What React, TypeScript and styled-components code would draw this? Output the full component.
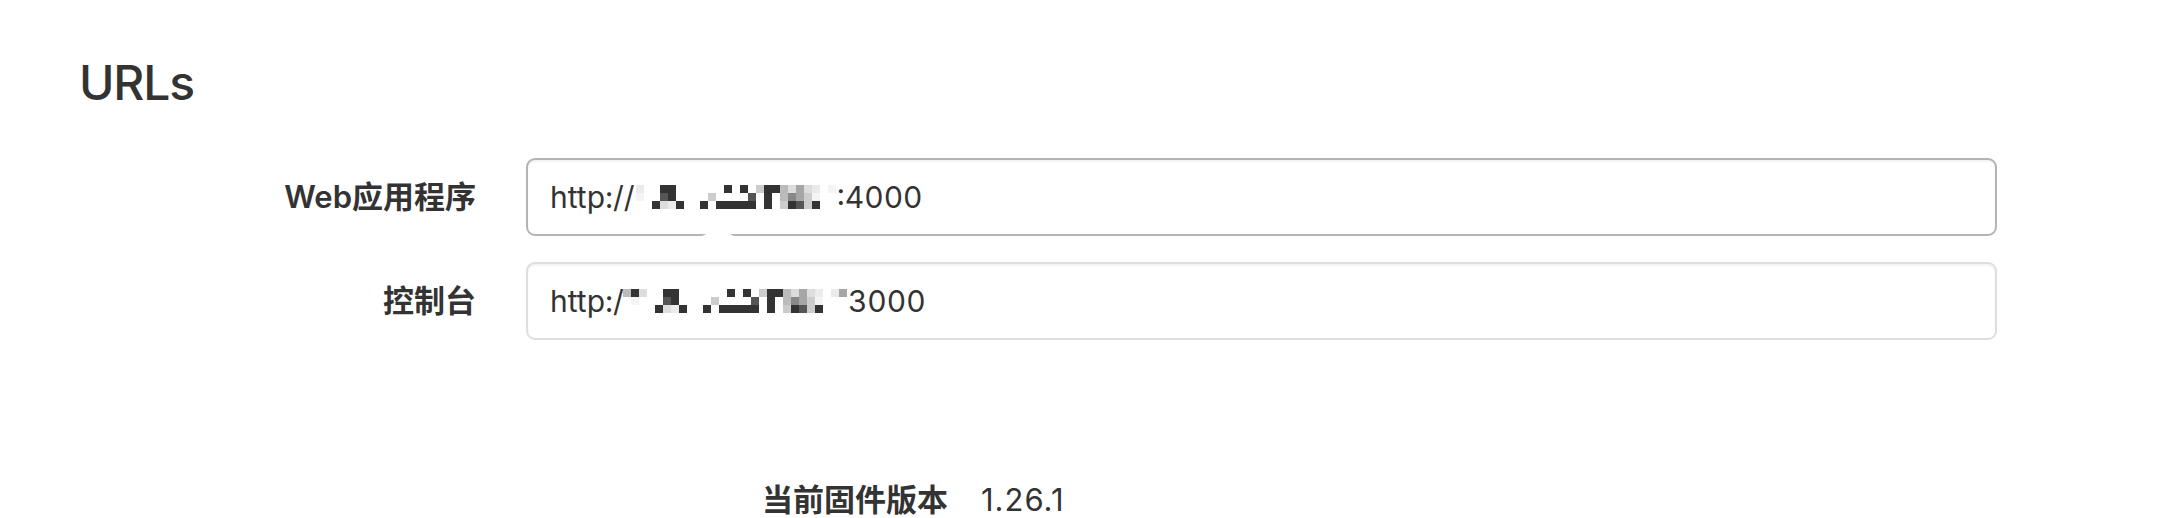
import React from 'react';
import styled, { createGlobalStyle } from 'styled-components';

const GlobalStyle = createGlobalStyle`
  html, body {
    margin: 0;
    padding: 0;
    background: #fff;
  }
  body {
    width: 2164px;
    height: 518px;
    overflow: hidden;
    color: #333;
    font-family: Inter, "Noto Sans CJK SC", sans-serif;
  }
`;

const Page = styled.div`
  padding: 59px 0 0 79px;
`;

const Title = styled.h3`
  margin: 0 0 51px;
  font-size: 48px;
  line-height: 48px;
  font-weight: 500;
  letter-spacing: -1.2px;
`;

const Form = styled.div`
  display: grid;
  grid-template-columns: 397px 1471px;
  column-gap: 50px;
  row-gap: 26px;
  align-items: center;
`;

const Label = styled.label`
  justify-self: end;
  text-align: right;
  font-size: 31px;
  font-weight: 600;
  line-height: 40px;
`;

const Field = styled.div<{ $active?: boolean }>`
  position: relative;
  box-sizing: border-box;
  height: 78px;
  display: flex;
  align-items: center;
  padding: 0 22px;
  border: 2px solid ${(p) => (p.$active ? '#b4b4b4' : '#dedede')};
  border-radius: 9px;
  box-shadow: inset 0 2px 2px rgba(0, 0, 0, 0.05);
  font-size: 30px;
  line-height: 36px;
  font-variant-numeric: tabular-nums;
  white-space: nowrap;
`;

const Notch = styled.span`
  position: absolute;
  left: 172px;
  bottom: -3px;
  width: 36px;
  height: 8px;
  background: #fff;
  clip-path: polygon(0 100%, 40% 15%, 50% 0, 60% 15%, 100% 100%);
`;

const MosaicSvg = styled.svg<{ $gap: number }>`
  display: inline-block;
  vertical-align: -6px;
  margin: 0 1px 0 ${(p) => p.$gap}px;
`;

const VersionRow = styled.div`
  display: flex;
  align-items: center;
  gap: 33px;
  margin: 140px 0 0 683px;
  line-height: 40px;
`;

const VersionLabel = styled.span`
  font-size: 31px;
  font-weight: 600;
`;

const VersionValue = styled.span`
  font-size: 31px;
  letter-spacing: 1px;
`;

const shades: Record<string, string> = {
  a: '#333333',
  b: '#555555',
  c: '#888888',
  d: '#a6a6a6',
  e: '#bbbbbb',
  f: '#cccccc',
  g: '#dddddd',
  h: '#ebebeb',
  i: '#f4f4f4',
};

const CELL_W = 8;
const CELL_H = 8;

function Mosaic({ rows, gap }: { rows: string[]; gap: number }) {
  const cols = rows[0].length;
  return (
    <MosaicSvg
      $gap={gap}
      width={cols * CELL_W}
      height={rows.length * CELL_H}
      viewBox={`0 0 ${cols * CELL_W} ${rows.length * CELL_H}`}
    >
      {rows.map((row, r) =>
        row.split('').map((ch, c) =>
          shades[ch] ? (
            <rect
              key={`${r}-${c}`}
              x={c * CELL_W}
              y={r * CELL_H}
              width={CELL_W}
              height={CELL_H}
              fill={shades[ch]}
            />
          ) : null
        )
      )}
    </MosaicSvg>
  );
}

const webMask = [
  'h..aa......a.a.faaegdgh.i',
  'i..ba....f....b.a.ecdfi..',
  '..agha..a.aaaaa.a.fabfa..',
];

const consoleMask = [
  'eag..aa......a.a.faaegdgh.hd',
  '.i...ba....f....b.a.ecdfi...',
  '....agha..a.aaaaa.a.fabfa...',
];

export default function App() {
  return (
    <>
      <GlobalStyle />
      <Page>
        <Title>URLs</Title>
        <Form>
          <Label>Web应用程序</Label>
          <Field $active>
            http://
            <Mosaic rows={webMask} gap={1} />
            :4000
            <Notch />
          </Field>
          <Label>控制台</Label>
          <Field>
            http:/
            <Mosaic rows={consoleMask} gap={-1} />
            3000
          </Field>
        </Form>
        <VersionRow>
          <VersionLabel>当前固件版本</VersionLabel>
          <VersionValue>1.26.1</VersionValue>
        </VersionRow>
      </Page>
    </>
  );
}
